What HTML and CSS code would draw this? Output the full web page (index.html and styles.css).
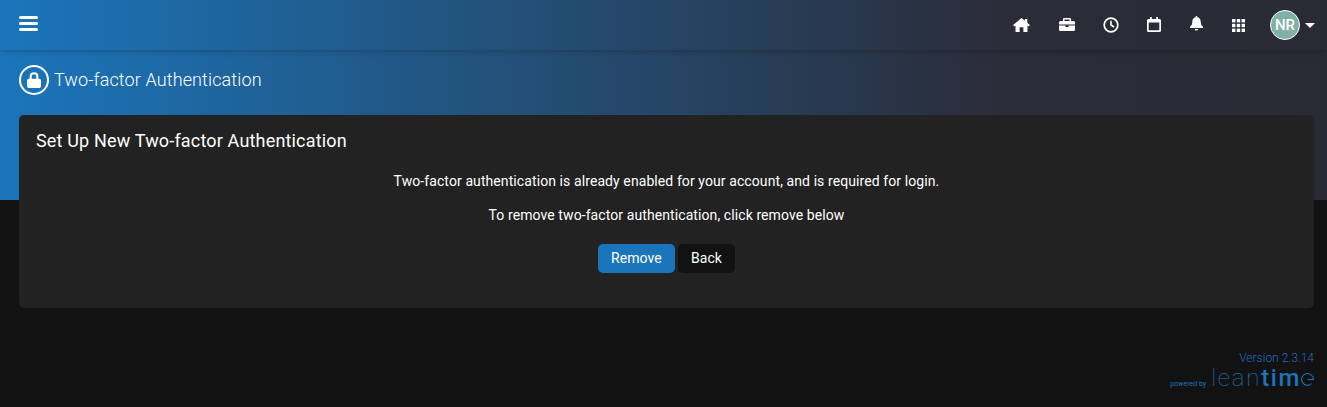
FILE: index.html
```html
<!DOCTYPE html>
<html lang="en">
<head>
    <meta charset="UTF-8">
    <title>Two-factor Authentication</title>
    <link rel="stylesheet" href="styles.css">
</head>
<body>
    <div class="backdrop">
        <header class="topbar">
            <button class="menu-btn" aria-label="Menu">
                <svg width="19" height="15" viewBox="0 0 19 15"><rect y="0" width="19" height="3" rx="1.5"/><rect y="6" width="19" height="3" rx="1.5"/><rect y="12" width="19" height="3" rx="1.5"/></svg>
            </button>
            <nav class="top-icons">
                <svg class="icon home" width="17" height="14" viewBox="0 0 18 15"><path d="M9 0 L12.6 3 V1 H15.2 V5.2 L18 7.6 L16.6 9 L15.4 8 V15 H11 V10 H7 V15 H2.6 V8 L1.4 9 L0 7.6 Z"/></svg>
                <svg class="icon case" width="16" height="13" viewBox="0 0 16 13"><path d="M5 0 H11 Q12 0 12 1 V3 H14.5 Q16 3 16 4.5 V6.5 H0 V4.5 Q0 3 1.5 3 H4 V1 Q4 0 5 0 Z M5.5 1.5 V3 H10.5 V1.5 Z M0 7.5 H6.5 V9 H9.5 V7.5 H16 V11.5 Q16 13 14.5 13 H1.5 Q0 13 0 11.5 Z"/></svg>
                <svg class="icon clock" width="16" height="16" viewBox="0 0 16 16"><circle cx="8" cy="8" r="6.8" fill="none" stroke="#fff" stroke-width="1.7"/><path d="M8 3.8 V8 L11 10" fill="none" stroke="#fff" stroke-width="1.6"/></svg>
                <svg class="icon cal" width="14" height="15" viewBox="0 0 14 15"><path d="M3 0 H4.8 V2 H9.2 V0 H11 V2 H12.5 Q14 2 14 3.5 V13.5 Q14 15 12.5 15 H1.5 Q0 15 0 13.5 V3.5 Q0 2 1.5 2 H3 Z M1.7 5.5 V13.3 H12.3 V5.5 Z"/></svg>
                <svg class="icon bell" width="13" height="15" viewBox="0 0 14 16"><path d="M7 0 Q8 0 8 1.2 Q11.5 2 11.5 6 Q11.5 10 14 11.5 V12.8 H0 V11.5 Q2.5 10 2.5 6 Q2.5 2 6 1.2 Q6 0 7 0 Z M5 13.8 H9 Q8.6 15.5 7 15.5 Q5.4 15.5 5 13.8 Z"/></svg>
                <svg class="icon grid" width="13" height="13" viewBox="0 0 13 13"><rect width="3.4" height="3.4"/><rect x="4.8" width="3.4" height="3.4"/><rect x="9.6" width="3.4" height="3.4"/><rect y="4.8" width="3.4" height="3.4"/><rect x="4.8" y="4.8" width="3.4" height="3.4"/><rect x="9.6" y="4.8" width="3.4" height="3.4"/><rect y="9.6" width="3.4" height="3.4"/><rect x="4.8" y="9.6" width="3.4" height="3.4"/><rect x="9.6" y="9.6" width="3.4" height="3.4"/></svg>
                <div class="user">
                    <span class="avatar">NR</span>
                    <span class="caret"></span>
                </div>
            </nav>
        </header>

        <div class="page-head">
            <span class="head-icon">
                <svg width="16" height="18" viewBox="0 0 16 18"><path d="M3 7.5 V5 Q3 0 8 0 Q13 0 13 5 V7.5 H14 Q16 7.5 16 9.5 V16 Q16 18 14 18 H2 Q0 18 0 16 V9.5 Q0 7.5 2 7.5 Z M5.4 7.5 H10.6 V5 Q10.6 2.4 8 2.4 Q5.4 2.4 5.4 5 Z"/></svg>
            </span>
            <h1>Two-factor Authentication</h1>
        </div>
    </div>

    <main class="card">
        <h2>Set Up New Two-factor Authentication</h2>
        <div class="card-body">
            <p>Two-factor authentication is already enabled for your account, and is required for login.</p>
            <p>To remove two-factor authentication, click remove below</p>
            <div class="actions">
                <a class="btn btn-primary">Remove</a>
                <a class="btn btn-dark">Back</a>
            </div>
        </div>
    </main>

    <footer class="footer">
        <div class="version">Version 2.3.14</div>
        <div class="brand">
            <span class="powered">powered by</span>
            <span class="logo">lean<b>tim</b></span>
            <!-- the e of the logo is a little clock -->
            <svg class="logo-e" width="13" height="13" viewBox="0 0 13 13"><path d="M6.5 6.5 H12.4 A5.9 5.9 0 1 0 10.6 10.7" fill="none" stroke="#1b75bb" stroke-width="1.1"/></svg>
        </div>
    </footer>
</body>
</html>
```

FILE: styles.css
```css
html, body {
    margin: 0;
    padding: 0;
}

body {
    font-family: "Roboto", sans-serif;
    font-size: 14px;
    color: #fff;
    background: #121212;
    height: 407px;
    overflow: hidden;
}

.backdrop {
    height: 200px;
    background: linear-gradient(to right, #1b75bb 0%, #2b2c38 76%, #2a2a35 100%);
}

.topbar {
    height: 50px;
    display: flex;
    align-items: center;
    justify-content: space-between;
    padding: 0 12px 0 19px;
    box-shadow: 0 1px 6px rgba(0, 0, 0, 0.25);
}

.menu-btn {
    background: none;
    border: 0;
    padding: 0;
    display: flex;
    margin-top: -3px;
}

.menu-btn svg, .icon {
    fill: #fff;
}

.top-icons {
    display: flex;
    align-items: center;
}

.icon {
    display: block;
    flex: none;
}

.home { margin-right: 29px; margin-left: -1px; }
.case { margin-right: 28px; margin-top: -1px; }
.clock { margin-right: 28px; }
.cal { margin-right: 29px; margin-top: -1px; }
.bell { margin-right: 29px; margin-top: -3px; }
.grid { margin-right: 25px; margin-top: 1px; }

.user {
    display: flex;
    align-items: center;
}

.avatar {
    width: 28px;
    height: 28px;
    border: 1px solid #fff;
    border-radius: 50%;
    background: #7fb1a6;
    font-size: 15px;
    font-weight: 500;
    display: flex;
    align-items: center;
    justify-content: center;
}

.caret {
    width: 0;
    height: 0;
    margin-left: 5px;
    border-left: 5px solid transparent;
    border-right: 5px solid transparent;
    border-top: 5px solid #fff;
}

.page-head {
    display: flex;
    align-items: center;
    gap: 5px;
    padding: 15px 19px 0;
}

.head-icon {
    width: 26px;
    height: 26px;
    border: 2px solid #fff;
    border-radius: 50%;
    display: flex;
    align-items: center;
    justify-content: center;
}

.head-icon svg {
    fill: #fff;
    width: 14px;
    height: 16px;
}

h1 {
    margin: 0;
    font-size: 18px;
    font-weight: 300;
    line-height: 30px;
    letter-spacing: 0.12px;
}

.card {
    margin: -85px 13px 0 19px;
    height: 193px;
    box-sizing: border-box;
    background: #222;
    border-radius: 5px;
    padding: 14px 17px;
}

h2 {
    margin: 0;
    font-size: 18px;
    font-weight: 400;
    line-height: 24px;
    letter-spacing: 0.17px;
}

.card-body {
    text-align: center;
    margin-top: 18px;
}

.card-body p {
    margin: 0 0 14px;
    line-height: 20px;
    letter-spacing: 0.09px;
}

.actions {
    display: flex;
    justify-content: center;
    gap: 3px;
    margin-top: 19px;
}

.btn {
    height: 29px;
    line-height: 29px;
    padding: 0 13px;
    border-radius: 5px;
    font-size: 14px;
    letter-spacing: 0.1px;
}

.btn-primary { background: #1b75bb; }
.btn-dark { background: #121212; }

.footer {
    margin: 42px 13px 0 0;
    text-align: right;
}

.version {
    color: #2369c4;
    font-size: 12px;
    font-weight: 300;
    line-height: 16px;
}

.brand {
    display: flex;
    justify-content: flex-end;
    align-items: flex-end;
    color: #1b75bb;
}

.powered {
    font-size: 7px;
    line-height: 11px;
    margin-right: 5px;
}

.logo {
    font-size: 24px;
    font-weight: 100;
    line-height: 24px;
    letter-spacing: 1.8px;
}

.logo b {
    font-weight: 500;
    letter-spacing: 1.6px;
}

.logo-e {
    margin: 0 0 4px 0;
}
```
